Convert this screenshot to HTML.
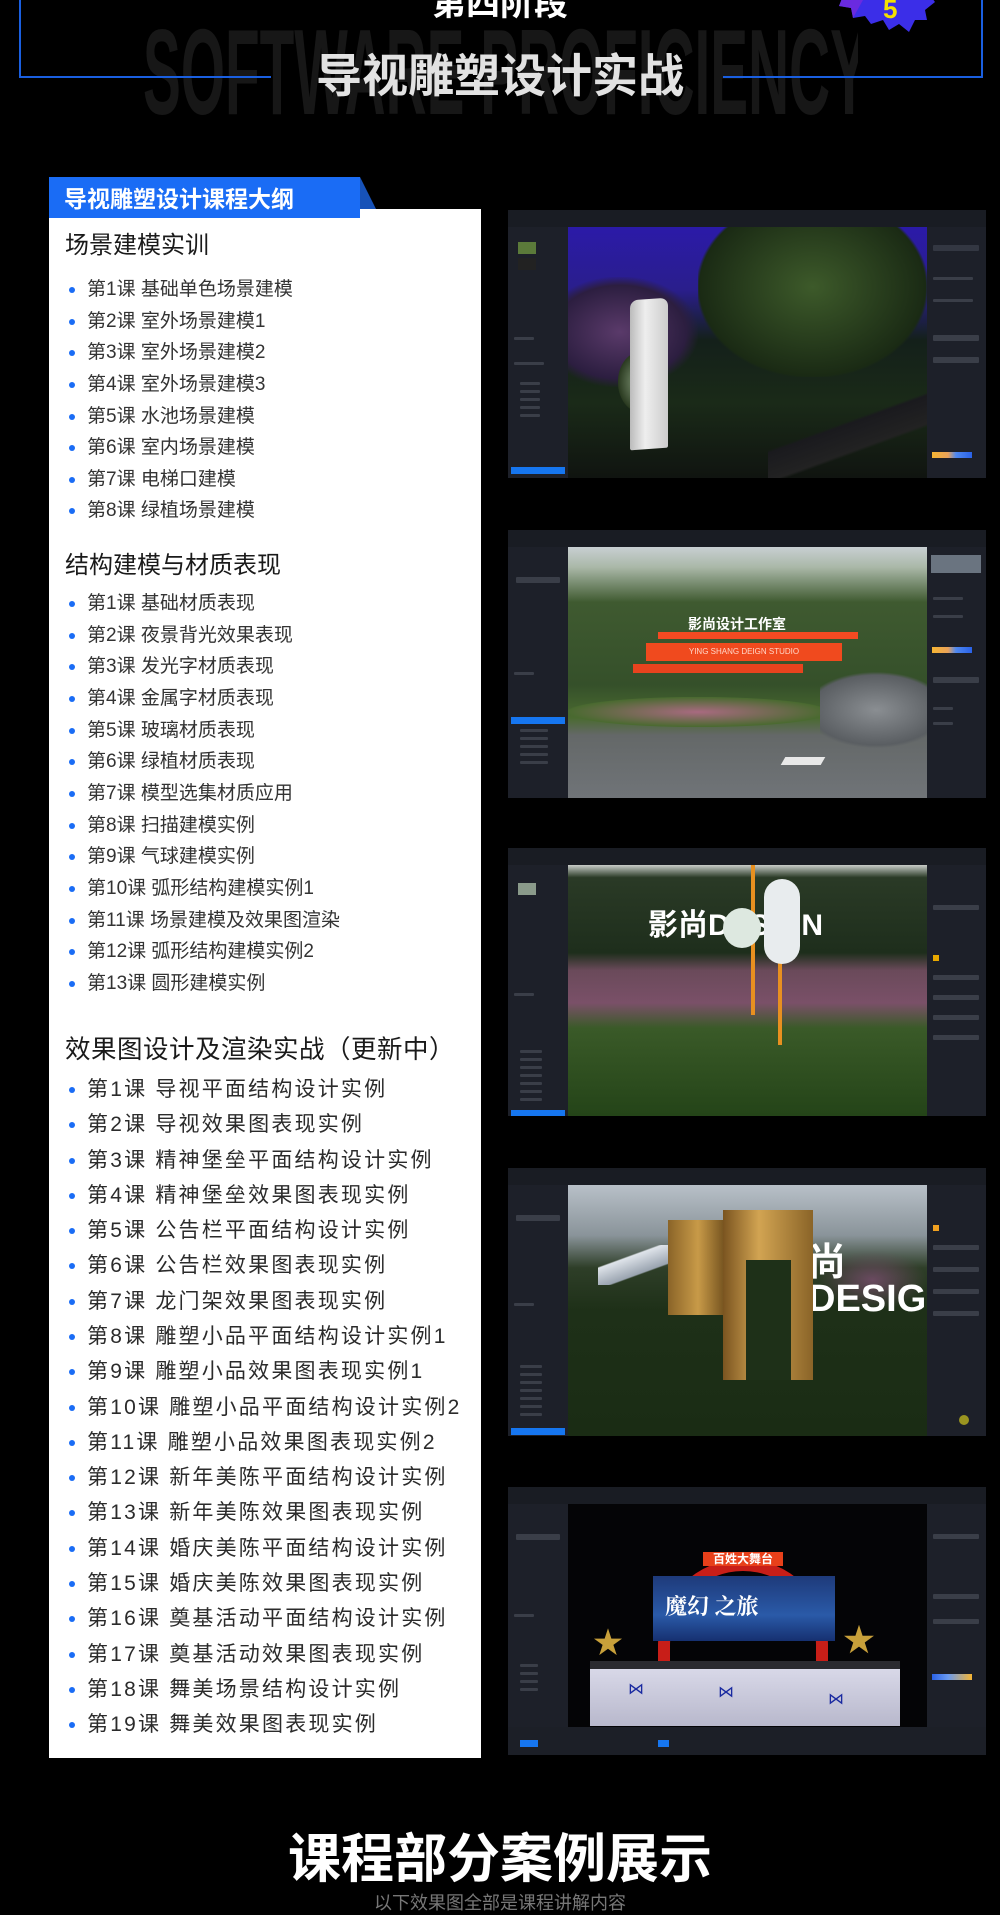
<!DOCTYPE html>
<html><head><meta charset="utf-8">
<style>
*{margin:0;padding:0;box-sizing:border-box}
body{width:1000px;height:1900px;background:#000;position:relative;overflow:hidden;font-family:"Liberation Sans","Noto Sans CJK SC",sans-serif}
.a{position:absolute}
.frame{position:absolute;left:508px;width:478px;height:268px;background:#1c1f27;overflow:hidden}
.frame .top{position:absolute;left:0;top:0;width:100%;height:17px;background:#191c23}
.frame .lp{position:absolute;left:0;top:17px;width:60px;bottom:0;background:#1d2029}
.frame .rp{position:absolute;right:0;top:17px;width:59px;bottom:0;background:#1d2029}
.frame .vp{position:absolute;left:60px;top:17px;width:359px;bottom:0;overflow:hidden}
.ln{position:absolute;height:3px;background:#3a3e48;border-radius:1px}
.sel{position:absolute;height:7px;background:#1676f0}
.grad{position:absolute;height:6px;background:linear-gradient(90deg,#f6b532,#e9a25a 40%,#4f88f0 60%,#2a62e8)}
.list{position:absolute;left:49px;font-family:"Liberation Sans","Noto Sans CJK SC",sans-serif;color:#262626}
.h{position:absolute;left:65px;font-size:24px;color:#1a1a1a;white-space:nowrap;line-height:1}
.li{position:absolute;left:87px;font-size:19px;color:#333;white-space:nowrap;line-height:1}
.li::before{content:"";position:absolute;left:-18px;top:7px;width:6px;height:6px;border-radius:50%;background:#1a6cf5}
.s3 .li{font-size:21px;letter-spacing:2.2px;color:#2b2b2b}
.s3 .li::before{top:8px}
</style></head><body>

<!-- top box -->
<div class="a" style="left:19px;top:-2px;width:2px;height:79px;background:#1a5fe0"></div>
<div class="a" style="left:981px;top:-2px;width:2px;height:79px;background:#1a5fe0"></div>
<div class="a" style="left:143px;top:22px;width:715px;height:100px;overflow:hidden">
<div style="font-family:'Liberation Sans',sans-serif;font-weight:bold;font-size:122px;line-height:100px;color:#171717;white-space:nowrap;transform-origin:0 0;transform:scaleX(0.465)">SOFTWARE PROFICIENCY</div>
</div>
<div class="a" style="left:19px;top:76px;width:252px;height:2px;background:#1a5fe0"></div>
<div class="a" style="left:723px;top:76px;width:260px;height:2px;background:#1a5fe0"></div>
<div class="a" style="left:0;width:1000px;top:-24px;text-align:center;color:#fff;font-size:34px;font-weight:bold;font-family:'Noto Sans CJK SC',sans-serif">第四阶段</div>
<svg class="a" style="left:833px;top:-20px" width="104" height="54" viewBox="0 0 104 54">
<polygon points="4,0 100,0 96,14 102,22 92,30 94,40 82,40 76,52 66,44 56,50 50,40 38,44 32,36 20,38 18,28 6,26 10,16 2,8" fill="#3b2ee8"/>
<polygon points="4,0 40,0 30,20 20,38 18,28 6,26 10,16 2,8" fill="#6a2ae0"/>
<text x="50" y="38" font-size="26" font-weight="bold" fill="#f5e000" font-family="Liberation Sans">5</text>
</svg>
<div class="a" style="left:0;width:1000px;top:43px;text-align:center;color:#e2e2e2;font-size:46px;font-weight:bold;font-family:'Noto Sans CJK SC',sans-serif;line-height:60px">导视雕塑设计实战</div>

<!-- panel -->
<div class="a" style="left:49px;top:209px;width:432px;height:1549px;background:#fff"></div>
<div class="a" style="left:49px;top:177px;width:311px;height:41px;background:#1a6cf5"></div>
<div class="a" style="left:360px;top:177px;width:0;height:0;border-bottom:32px solid #1752b8;border-right:16px solid transparent"></div>
<div class="a" style="left:64px;top:180px;color:#fff;font-size:23px;font-weight:bold;font-family:'Noto Sans CJK SC',sans-serif;line-height:34px">导视雕塑设计课程大纲</div>

<div class="list">
<div class="h" style="top:234px;left:16px">场景建模实训</div>
<div class="li" style="top:280px;left:38px">第1课 基础单色场景建模</div>
<div class="li" style="top:312px;left:38px">第2课 室外场景建模1</div>
<div class="li" style="top:343px;left:38px">第3课 室外场景建模2</div>
<div class="li" style="top:375px;left:38px">第4课 室外场景建模3</div>
<div class="li" style="top:407px;left:38px">第5课 水池场景建模</div>
<div class="li" style="top:438px;left:38px">第6课 室内场景建模</div>
<div class="li" style="top:470px;left:38px">第7课 电梯口建模</div>
<div class="li" style="top:501px;left:38px">第8课 绿植场景建模</div>

<div class="h" style="top:554px;left:16px">结构建模与材质表现</div>
<div class="li" style="top:594px;left:38px">第1课 基础材质表现</div>
<div class="li" style="top:626px;left:38px">第2课 夜景背光效果表现</div>
<div class="li" style="top:657px;left:38px">第3课 发光字材质表现</div>
<div class="li" style="top:689px;left:38px">第4课 金属字材质表现</div>
<div class="li" style="top:721px;left:38px">第5课 玻璃材质表现</div>
<div class="li" style="top:752px;left:38px">第6课 绿植材质表现</div>
<div class="li" style="top:784px;left:38px">第7课 模型选集材质应用</div>
<div class="li" style="top:816px;left:38px">第8课 扫描建模实例</div>
<div class="li" style="top:847px;left:38px">第9课 气球建模实例</div>
<div class="li" style="top:879px;left:38px">第10课 弧形结构建模实例1</div>
<div class="li" style="top:911px;left:38px">第11课 场景建模及效果图渲染</div>
<div class="li" style="top:942px;left:38px">第12课 弧形结构建模实例2</div>
<div class="li" style="top:974px;left:38px">第13课 圆形建模实例</div>
</div>

<div class="list s3">
<div class="h" style="top:1038px;left:16px;font-size:25.5px;letter-spacing:0.5px">效果图设计及渲染实战（更新中）</div>
<div class="li" style="top:1079px;left:38px">第1课 导视平面结构设计实例</div>
<div class="li" style="top:1114px;left:38px">第2课 导视效果图表现实例</div>
<div class="li" style="top:1150px;left:38px">第3课 精神堡垒平面结构设计实例</div>
<div class="li" style="top:1185px;left:38px">第4课 精神堡垒效果图表现实例</div>
<div class="li" style="top:1220px;left:38px">第5课 公告栏平面结构设计实例</div>
<div class="li" style="top:1255px;left:38px">第6课 公告栏效果图表现实例</div>
<div class="li" style="top:1291px;left:38px">第7课 龙门架效果图表现实例</div>
<div class="li" style="top:1326px;left:38px">第8课 雕塑小品平面结构设计实例1</div>
<div class="li" style="top:1361px;left:38px">第9课 雕塑小品效果图表现实例1</div>
<div class="li" style="top:1397px;left:38px">第10课 雕塑小品平面结构设计实例2</div>
<div class="li" style="top:1432px;left:38px">第11课 雕塑小品效果图表现实例2</div>
<div class="li" style="top:1467px;left:38px">第12课 新年美陈平面结构设计实例</div>
<div class="li" style="top:1502px;left:38px">第13课 新年美陈效果图表现实例</div>
<div class="li" style="top:1538px;left:38px">第14课 婚庆美陈平面结构设计实例</div>
<div class="li" style="top:1573px;left:38px">第15课 婚庆美陈效果图表现实例</div>
<div class="li" style="top:1608px;left:38px">第16课 奠基活动平面结构设计实例</div>
<div class="li" style="top:1644px;left:38px">第17课 奠基活动效果图表现实例</div>
<div class="li" style="top:1679px;left:38px">第18课 舞美场景结构设计实例</div>
<div class="li" style="top:1714px;left:38px">第19课 舞美效果图表现实例</div>
</div>

<!-- frame 1 -->
<div class="frame" style="top:210px">
<div class="top"></div><div class="lp">
<div class="a" style="left:10px;top:15px;width:18px;height:12px;background:#5b7a3a"></div>
<div class="a" style="left:10px;top:31px;width:18px;height:12px;background:#222"></div>
<div class="ln" style="left:6px;top:110px;width:20px"></div>
<div class="ln" style="left:6px;top:135px;width:30px"></div>
<div class="ln" style="left:12px;top:155px;width:20px"></div><div class="ln" style="left:12px;top:163px;width:20px"></div><div class="ln" style="left:12px;top:171px;width:20px"></div><div class="ln" style="left:12px;top:179px;width:20px"></div><div class="ln" style="left:12px;top:187px;width:20px"></div>
<div class="sel" style="left:3px;top:240px;width:54px"></div>
</div>
<div class="vp" style="background:linear-gradient(180deg,#2b1aa8 0%,#2a1e8c 25%,#14201a 45%,#1a2a18 70%,#101410 100%)">
<div class="a" style="left:130px;top:0;width:229px;height:150px;background:radial-gradient(ellipse at 50% 40%,#3d5a2a,#1a2a14 70%,transparent 72%)"></div>
<div class="a" style="left:0;top:50px;width:130px;height:110px;background:radial-gradient(ellipse at 40% 50%,#5a3a6a,#2c1e40 60%,transparent 72%)"></div>
<div class="a" style="left:200px;top:160px;width:159px;height:100px;background:linear-gradient(160deg,transparent 40%,#1a1a1e 42%,#222 60%,transparent 62%)"></div>
<div class="a" style="left:50px;top:125px;width:45px;height:60px;background:radial-gradient(#8aa080,#2a3a20 70%,transparent 72%)"></div>
<div class="a" style="left:62px;top:72px;width:38px;height:150px;background:linear-gradient(90deg,#bbb,#eee 40%,#ccc);border-radius:8px 8px 2px 2px;transform:skewY(-4deg)"></div>
</div>
<div class="rp">
<div class="ln" style="left:6px;top:18px;width:46px;background:#333742;height:6px"></div>
<div class="ln" style="left:6px;top:50px;width:40px"></div><div class="ln" style="left:6px;top:72px;width:40px"></div>
<div class="ln" style="left:6px;top:108px;width:46px;height:6px"></div><div class="ln" style="left:6px;top:130px;width:46px;height:6px"></div>
<div class="grad" style="left:5px;top:225px;width:40px"></div>
</div>
</div>

<!-- frame 2 -->
<div class="frame" style="top:530px">
<div class="top"></div><div class="lp">
<div class="ln" style="left:8px;top:30px;width:44px;height:6px"></div>
<div class="ln" style="left:6px;top:125px;width:20px"></div>
<div class="sel" style="left:3px;top:170px;width:54px"></div>
<div class="ln" style="left:12px;top:182px;width:28px"></div><div class="ln" style="left:12px;top:190px;width:28px"></div><div class="ln" style="left:12px;top:198px;width:28px"></div><div class="ln" style="left:12px;top:206px;width:28px"></div><div class="ln" style="left:12px;top:214px;width:28px"></div>
</div>
<div class="vp" style="background:linear-gradient(180deg,#c8cfd2 0%,#aab8a8 8%,#3f5a30 22%,#35502a 55%,#4a6a30 68%,#646868 75%,#707478 100%)">
<div class="a" style="left:0;top:150px;width:260px;height:30px;background:radial-gradient(ellipse,#a86a80,#4a6a30 70%,transparent 72%)"></div>
<div class="a" style="left:90px;top:85px;width:200px;height:7px;background:#f44a22"></div>
<div class="a" style="left:78px;top:96px;width:196px;height:18px;background:#f04a1e;color:#ffd6c8;font-size:8px;text-align:center;line-height:18px">YING SHANG DEIGN STUDIO</div>
<div class="a" style="left:65px;top:117px;width:170px;height:9px;background:#e8431e"></div>
<div class="a" style="left:120px;top:67px;color:#fff;font-size:14px;font-weight:bold;font-family:'Noto Sans CJK SC',sans-serif">影尚设计工作室</div>
<div class="a" style="left:252px;top:118px;width:140px;height:90px;background:radial-gradient(ellipse at 40% 50%,#8a8e92,#5a5e62 55%,transparent 60%)"></div>
<div class="a" style="left:215px;top:210px;width:40px;height:8px;background:#e8e8e8;transform:skewX(-30deg)"></div>
</div>
<div class="rp">
<div class="a" style="left:4px;top:8px;width:50px;height:18px;background:#6a7480"></div>
<div class="ln" style="left:6px;top:50px;width:30px"></div><div class="ln" style="left:6px;top:68px;width:30px"></div>
<div class="grad" style="left:5px;top:100px;width:40px"></div>
<div class="ln" style="left:6px;top:130px;width:46px;height:6px"></div>
<div class="ln" style="left:6px;top:160px;width:20px"></div><div class="ln" style="left:6px;top:175px;width:20px"></div>
</div>
</div>

<!-- frame 3 -->
<div class="frame" style="top:848px">
<div class="top"></div><div class="lp">
<div class="a" style="left:10px;top:18px;width:18px;height:12px;background:#8a9a8a"></div>
<div class="ln" style="left:6px;top:128px;width:20px"></div>
<div class="ln" style="left:12px;top:185px;width:22px"></div><div class="ln" style="left:12px;top:193px;width:22px"></div><div class="ln" style="left:12px;top:201px;width:22px"></div><div class="ln" style="left:12px;top:209px;width:22px"></div><div class="ln" style="left:12px;top:217px;width:22px"></div><div class="ln" style="left:12px;top:225px;width:22px"></div><div class="ln" style="left:12px;top:233px;width:22px"></div>
<div class="sel" style="left:3px;top:245px;width:54px"></div>
</div>
<div class="vp" style="background:linear-gradient(180deg,#c8ccc8 0%,#2a3a26 5%,#1e2e1c 35%,#6a4a5a 42%,#7a5068 55%,#3a5a28 65%,#244418 100%)">
<div class="a" style="left:80px;top:45px;width:220px;height:32px;color:#fff;font-size:30px;font-weight:bold;line-height:32px;white-space:nowrap">影尚DESIGN</div>
<div class="a" style="left:183px;top:0;width:4px;height:150px;background:#e89020"></div>
<div class="a" style="left:210px;top:15px;width:4px;height:165px;background:#e89020"></div>
<div class="a" style="left:196px;top:14px;width:36px;height:85px;background:#e8ecee;border-radius:18px"></div>
<div class="a" style="left:155px;top:43px;width:38px;height:40px;background:#dde8e0;border-radius:50%"></div>
</div>
<div class="rp">
<div class="ln" style="left:6px;top:40px;width:46px;height:5px"></div>
<div class="a" style="left:6px;top:90px;width:6px;height:6px;background:#e8a800"></div>
<div class="ln" style="left:6px;top:110px;width:46px;height:5px"></div><div class="ln" style="left:6px;top:130px;width:46px;height:5px"></div><div class="ln" style="left:6px;top:150px;width:46px;height:5px"></div><div class="ln" style="left:6px;top:170px;width:46px;height:5px"></div>
</div>
</div>

<!-- frame 4 -->
<div class="frame" style="top:1168px">
<div class="top"></div><div class="lp">
<div class="ln" style="left:8px;top:30px;width:44px;height:6px"></div>
<div class="ln" style="left:6px;top:118px;width:20px"></div>
<div class="ln" style="left:12px;top:180px;width:22px"></div><div class="ln" style="left:12px;top:188px;width:22px"></div><div class="ln" style="left:12px;top:196px;width:22px"></div><div class="ln" style="left:12px;top:204px;width:22px"></div><div class="ln" style="left:12px;top:212px;width:22px"></div><div class="ln" style="left:12px;top:220px;width:22px"></div><div class="ln" style="left:12px;top:228px;width:22px"></div>
<div class="sel" style="left:3px;top:243px;width:54px"></div>
</div>
<div class="vp" style="background:linear-gradient(180deg,#b8c0c8 0%,#8a949a 20%,#2e3e28 33%,#1e3018 50%,#1a2c14 100%)">
<div class="a" style="left:250px;top:65px;width:109px;height:60px;background:radial-gradient(ellipse,#6a4a60,transparent 70%)"></div>
<div class="a" style="left:240px;top:60px;width:120px;height:36px;color:#fff;font-size:38px;font-weight:bold;line-height:36px">尚DESIG</div>
<div class="a" style="left:30px;top:60px;width:90px;height:40px;background:linear-gradient(160deg,transparent 30%,#dfe4ea 32%,#9aa4b0 60%,transparent 62%)"></div>
<div class="a" style="left:100px;top:35px;width:60px;height:95px;background:linear-gradient(90deg,#8a6428,#c89a48,#6a4a1a)"></div>
<div class="a" style="left:155px;top:25px;width:90px;height:170px;background:linear-gradient(90deg,#7a5420,#d2a452 40%,#8a6428)"></div>
<div class="a" style="left:178px;top:75px;width:45px;height:120px;background:#1e3018"></div>
</div>
<div class="rp">
<div class="a" style="left:6px;top:40px;width:6px;height:6px;background:#f0a020"></div>
<div class="ln" style="left:6px;top:60px;width:46px;height:5px"></div><div class="ln" style="left:6px;top:82px;width:46px;height:5px"></div><div class="ln" style="left:6px;top:104px;width:46px;height:5px"></div><div class="ln" style="left:6px;top:126px;width:46px;height:5px"></div>
<div class="a" style="left:32px;top:230px;width:10px;height:10px;border-radius:50%;background:#9a9420"></div>
</div>
</div>

<!-- frame 5 -->
<div class="frame" style="top:1487px;background:#1a1d25">
<div class="top"></div><div class="lp" style="bottom:28px">
<div class="ln" style="left:8px;top:30px;width:44px;height:6px"></div>
<div class="ln" style="left:6px;top:110px;width:20px"></div>
<div class="ln" style="left:12px;top:160px;width:18px"></div><div class="ln" style="left:12px;top:168px;width:18px"></div><div class="ln" style="left:12px;top:176px;width:18px"></div><div class="ln" style="left:12px;top:184px;width:18px"></div>
</div>
<div class="vp" style="background:#040406;bottom:28px">
<div class="a" style="left:90px;top:55px;width:170px;height:120px;border:12px solid #c81e18;border-bottom:none;border-radius:90px 90px 0 0"></div>
<div class="a" style="left:135px;top:48px;width:80px;height:14px;background:#e8401a;color:#fff;font-size:12px;font-weight:bold;line-height:14px;text-align:center;font-family:'Noto Sans CJK SC',sans-serif">百姓大舞台</div>
<div class="a" style="left:85px;top:72px;width:182px;height:65px;background:linear-gradient(180deg,#1e3a7a,#2a5aa8 60%,#163070);color:#fff;font-size:22px;font-weight:bold;line-height:60px;padding-left:12px;font-family:'Noto Serif CJK SC',serif">魔幻 之旅</div>
<div class="a" style="left:25px;top:125px;width:30px;height:30px;color:#c8a03a;font-size:30px;line-height:30px">★</div>
<div class="a" style="left:275px;top:120px;width:32px;height:32px;color:#c8a03a;font-size:32px;line-height:32px">★</div>
<div class="a" style="left:22px;top:157px;width:310px;height:8px;background:#2a2a30"></div>
<div class="a" style="left:22px;top:165px;width:310px;height:57px;background:linear-gradient(180deg,#d8d8e8,#b8b8cc)"></div>
<div class="a" style="left:60px;top:175px;color:#1a2aa0;font-size:16px">⋈</div>
<div class="a" style="left:150px;top:178px;color:#1a2aa0;font-size:16px">⋈</div>
<div class="a" style="left:260px;top:185px;color:#1a2aa0;font-size:16px">⋈</div>
</div>
<div class="rp" style="bottom:28px">
<div class="ln" style="left:6px;top:30px;width:46px;height:5px"></div>
<div class="ln" style="left:6px;top:90px;width:46px;height:5px"></div><div class="ln" style="left:6px;top:115px;width:46px;height:5px"></div>
<div class="grad" style="left:5px;top:170px;width:40px;background:linear-gradient(90deg,#2a62e8,#6a9af0 40%,#f6b532)"></div>
</div>
<div class="a" style="left:0;bottom:0;width:100%;height:28px;background:#1c1f27">
<div class="a" style="left:12px;top:13px;width:18px;height:7px;background:#1676f0"></div>
<div class="a" style="left:150px;top:13px;width:11px;height:7px;background:#1676f0"></div>
</div>
</div>

<div class="a" style="left:0;width:1000px;top:1822px;text-align:center;color:#fff;font-size:53px;font-weight:bold;font-family:'Noto Sans CJK SC',sans-serif;line-height:66px">课程部分案例展示</div>
<div class="a" style="left:0;width:1000px;top:1890px;text-align:center;color:#777;font-size:18px;font-family:'Noto Sans CJK SC',sans-serif;line-height:24px">以下效果图全部是课程讲解内容</div>
</body></html>
